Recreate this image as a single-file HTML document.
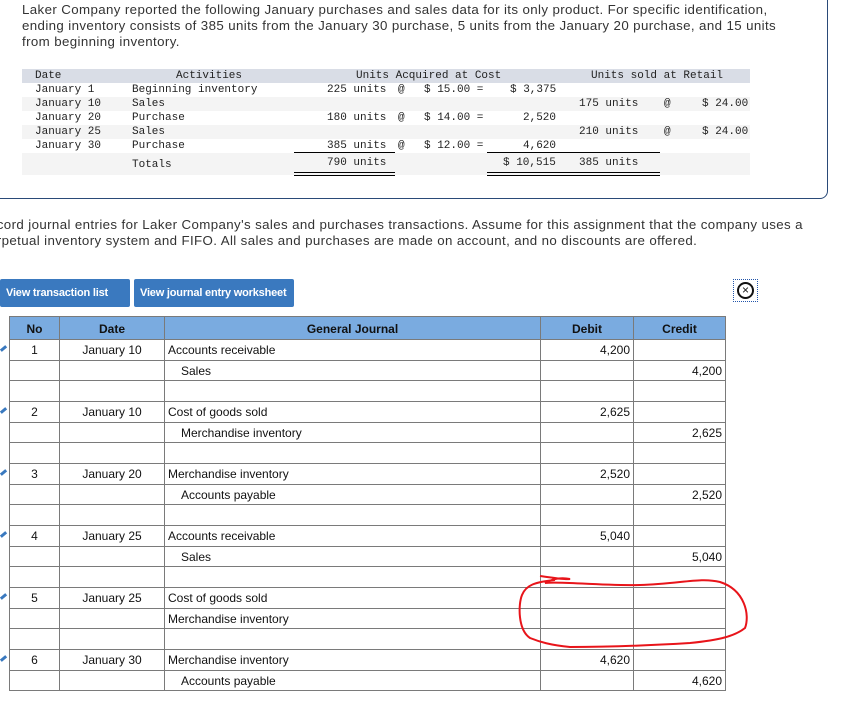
<!DOCTYPE html>
<html><head><meta charset="utf-8"><style>
*{margin:0;padding:0;box-sizing:border-box}
body{width:867px;height:709px;overflow:hidden;background:#fff;position:relative;font-family:"Liberation Sans",Arial,sans-serif}
.p{position:absolute;font-size:13.3px;color:#333;line-height:16px;white-space:nowrap;letter-spacing:0.38px}
.box{position:absolute;left:-12px;top:-12px;width:840px;height:211px;border:1.5px solid #2a4a78;border-radius:8px}
.m{position:absolute;font-family:"Liberation Mono","DejaVu Sans Mono",monospace;font-size:11px;color:#222;white-space:nowrap;line-height:14px}
.band{position:absolute;left:22px;width:728px;height:14px;background:#f4f4f4}
.btn{position:absolute;top:279px;height:28px;background:#3a79bf;color:#fff;font-size:11px;font-weight:bold;line-height:28px;padding-left:6px;border-radius:2px;letter-spacing:-0.2px}
table{position:absolute;left:9px;top:316px;border-collapse:collapse;font-size:12px;color:#111}
td,th{border:1.5px solid #7a7a7a;padding:1px 3px 0;height:20.67px;white-space:nowrap}
th{background:#7aabe0;font-weight:bold;height:23px;text-align:center}
.c{text-align:center}.r{text-align:right}.i{padding-left:16px}
.pen{position:absolute;left:0;width:7px;height:3px;background:#3a79bf;transform:rotate(-40deg)}
</style></head><body>
<div class="box"></div>
<div class="p" style="left:22px;top:2px">Laker Company reported the following January purchases and sales data for its only product. For specific identification,<br>ending inventory consists of 385 units from the January 30 purchase, 5 units from the January 20 purchase, and 15 units<br>from beginning inventory.</div>

<div class="band" style="top:69px;background:#d9dde6"></div>
<div class="band" style="top:97px"></div>
<div class="band" style="top:125px"></div>
<div class="band" style="top:153px;height:22px"></div>
<div class="m" style="left:35px;top:69px">Date</div>
<div class="m" style="left:176px;top:69px">Activities</div>
<div class="m" style="left:356px;top:69px">Units Acquired at Cost</div>
<div class="m" style="left:591px;top:69px">Units sold at Retail</div>
<div class="m" style="left:35px;top:83px">January 1<br>January 10<br>January 20<br>January 25<br>January 30</div>
<div class="m" style="left:132px;top:83px">Beginning inventory<br>Sales<br>Purchase<br>Sales<br>Purchase</div>
<div class="m" style="left:132px;top:158px">Totals</div>
<div class="m" style="left:327px;top:83px">225 units</div><div class="m" style="left:398px;top:83px">@</div><div class="m" style="left:424px;top:83px">$ 15.00 =</div>
<div class="m" style="left:327px;top:111px">180 units</div><div class="m" style="left:398px;top:111px">@</div><div class="m" style="left:424px;top:111px">$ 14.00 =</div>
<div class="m" style="left:327px;top:139px">385 units</div><div class="m" style="left:398px;top:139px">@</div><div class="m" style="left:424px;top:139px">$ 12.00 =</div>
<div class="m" style="left:327px;top:156px">790 units</div>
<div class="m" style="left:510px;top:83px">$ 3,375</div>
<div class="m" style="left:523px;top:111px">2,520</div>
<div class="m" style="left:523px;top:139px">4,620</div>
<div class="m" style="left:503px;top:156px">$ 10,515</div>
<div class="m" style="left:579px;top:97px">175 units</div><div class="m" style="left:664px;top:97px">@</div><div class="m" style="left:702px;top:97px">$ 24.00</div>
<div class="m" style="left:579px;top:125px">210 units</div><div class="m" style="left:664px;top:125px">@</div><div class="m" style="left:702px;top:125px">$ 24.00</div>
<div class="m" style="left:579px;top:156px">385 units</div>
<div style="position:absolute;left:294px;top:152px;width:101px;height:1px;background:#000"></div>
<div style="position:absolute;left:487px;top:152px;width:173px;height:1px;background:#000"></div>
<div style="position:absolute;left:294px;top:172px;width:101px;height:4px;border-top:1px solid #000;border-bottom:1px solid #000"></div>
<div style="position:absolute;left:487px;top:172px;width:173px;height:4px;border-top:1px solid #000;border-bottom:1px solid #000"></div>

<div class="p" style="left:-11px;top:217px">ecord journal entries for Laker Company's sales and purchases transactions. Assume for this assignment that the company uses a<br>erpetual inventory system and FIFO. All sales and purchases are made on account, and no discounts are offered.</div>

<div class="btn" style="left:0;width:130px">View transaction list</div>
<div class="btn" style="left:134px;width:160px">View journal entry worksheet</div>
<div style="position:absolute;left:733px;top:279px;width:25px;height:23px;border:1px dotted #2255aa"></div>
<div style="position:absolute;left:737px;top:282px;width:17px;height:17px;border:2px solid #111;border-radius:50%;font-size:12px;line-height:12px;text-align:center;color:#111">×</div>

<table>
<tr><th style="width:50px">No</th><th style="width:105px">Date</th><th style="width:376px">General Journal</th><th style="width:93px">Debit</th><th style="width:92px">Credit</th></tr>
<tr><td class="c">1</td><td class="c">January 10</td><td>Accounts receivable</td><td class="r">4,200</td><td></td></tr>
<tr><td></td><td></td><td class="i">Sales</td><td></td><td class="r">4,200</td></tr>
<tr><td></td><td></td><td></td><td></td><td></td></tr>
<tr><td class="c">2</td><td class="c">January 10</td><td>Cost of goods sold</td><td class="r">2,625</td><td></td></tr>
<tr><td></td><td></td><td class="i">Merchandise inventory</td><td></td><td class="r">2,625</td></tr>
<tr><td></td><td></td><td></td><td></td><td></td></tr>
<tr><td class="c">3</td><td class="c">January 20</td><td>Merchandise inventory</td><td class="r">2,520</td><td></td></tr>
<tr><td></td><td></td><td class="i">Accounts payable</td><td></td><td class="r">2,520</td></tr>
<tr><td></td><td></td><td></td><td></td><td></td></tr>
<tr><td class="c">4</td><td class="c">January 25</td><td>Accounts receivable</td><td class="r">5,040</td><td></td></tr>
<tr><td></td><td></td><td class="i">Sales</td><td></td><td class="r">5,040</td></tr>
<tr><td></td><td></td><td></td><td></td><td></td></tr>
<tr><td class="c">5</td><td class="c">January 25</td><td>Cost of goods sold</td><td></td><td></td></tr>
<tr><td></td><td></td><td>Merchandise inventory</td><td></td><td></td></tr>
<tr><td></td><td></td><td></td><td></td><td></td></tr>
<tr><td class="c">6</td><td class="c">January 30</td><td>Merchandise inventory</td><td class="r">4,620</td><td></td></tr>
<tr><td></td><td></td><td class="i">Accounts payable</td><td></td><td class="r">4,620</td></tr>
</table>
<div class="pen" style="top:347px"></div>
<div class="pen" style="top:409px"></div>
<div class="pen" style="top:471px"></div>
<div class="pen" style="top:533px"></div>
<div class="pen" style="top:595px"></div>
<div class="pen" style="top:657px"></div>

<svg style="position:absolute;left:0;top:0" width="867" height="709">
<path d="M540 576 C555 578 565 580 570 579 C560 577 552 579 545 583 C560 581 600 586 640 585 C680 584 700 577 720 582 C745 590 750 615 745 628 C735 636 720 640 690 643 C640 646 600 647 570 647 C550 645 540 642 530 638 C518 630 518 605 522 595 C526 585 535 582 555 580" fill="none" stroke="#e8141a" stroke-width="2"/>
</svg>
</body></html>
